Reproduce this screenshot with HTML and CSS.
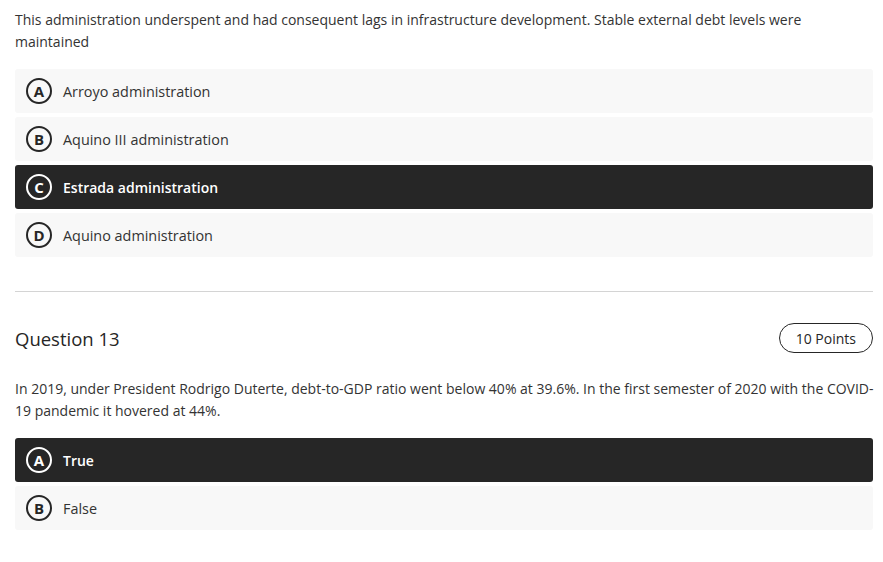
FILE: index.html
```html
<!DOCTYPE html>
<html lang="en">
<head>
<meta charset="utf-8">
<title>Quiz</title>
<link rel="stylesheet" href="styles.css">
</head>
<body>
<div class="page">
  <p class="prompt">This administration underspent and had consequent lags in infrastructure development. Stable external debt levels were maintained</p>
  <div class="options">
    <div class="option"><span class="badge">A</span><span class="label">Arroyo administration</span></div>
    <div class="option"><span class="badge">B</span><span class="label">Aquino III administration</span></div>
    <div class="option selected"><span class="badge">C</span><span class="label">Estrada administration</span></div>
    <div class="option"><span class="badge">D</span><span class="label">Aquino administration</span></div>
  </div>
  <hr class="divider">
  <div class="q-head">
    <h2 class="q-title">Question 13</h2>
    <span class="points">10 Points</span>
  </div>
  <p class="prompt wide">In 2019, under President Rodrigo Duterte, debt-to-GDP ratio went below 40% at 39.6%. In the first semester of 2020 with the COVID-<wbr>19 pandemic it hovered at 44%.</p>
  <div class="options">
    <div class="option selected"><span class="badge">A</span><span class="label">True</span></div>
    <div class="option"><span class="badge">B</span><span class="label">False</span></div>
  </div>
</div>
</body>
</html>
```

FILE: styles.css
```css
html, body {
  margin: 0;
  padding: 0;
  background: #ffffff;
}
body {
  font-family: "Open Sans", "Noto Sans", sans-serif;
  color: #333333;
}
.page {
  padding: 9px 10px 0 15px;
}
.prompt {
  margin: 0;
  font-size: 14px;
  line-height: 22px;
  color: #333333;
}
.prompt.wide {
  margin-right: -8px;
}
.options {
  display: flex;
  flex-direction: column;
  gap: 4px;
  margin-top: 16px;
}
.option {
  display: flex;
  align-items: center;
  height: 44px;
  padding-left: 11px;
  background: #f8f8f8;
  border-radius: 3px;
  box-sizing: border-box;
  color: #333333;
}
.badge {
  width: 26px;
  height: 26px;
  box-sizing: border-box;
  border: 2px solid #262626;
  border-radius: 50%;
  display: flex;
  align-items: center;
  justify-content: center;
  font-size: 15px;
  font-weight: 700;
  line-height: 1;
  margin-right: 11px;
  flex-shrink: 0;
  color: #262626;
}
.label {
  font-size: 14.4px;
  font-weight: 500;
}
.option.selected {
  background: #262626;
  color: #ffffff;
}
.option.selected .badge {
  border-color: #ffffff;
  color: #ffffff;
}
.option.selected .label {
  font-size: 14px;
  font-weight: 600;
}
.divider {
  border: 0;
  border-top: 1px solid #d4d4d4;
  margin: 34px 0 0 0;
}
.q-head {
  display: flex;
  justify-content: space-between;
  align-items: center;
  margin-top: 31px;
  margin-bottom: 25px;
}
.q-title {
  margin: 0;
  font-size: 18.5px;
  font-weight: 400;
  color: #262626;
}
.points {
  height: 30px;
  box-sizing: border-box;
  padding: 0 16px;
  border: 1px solid #262626;
  border-radius: 15px;
  display: flex;
  align-items: center;
  font-size: 14px;
  color: #262626;
}
```
